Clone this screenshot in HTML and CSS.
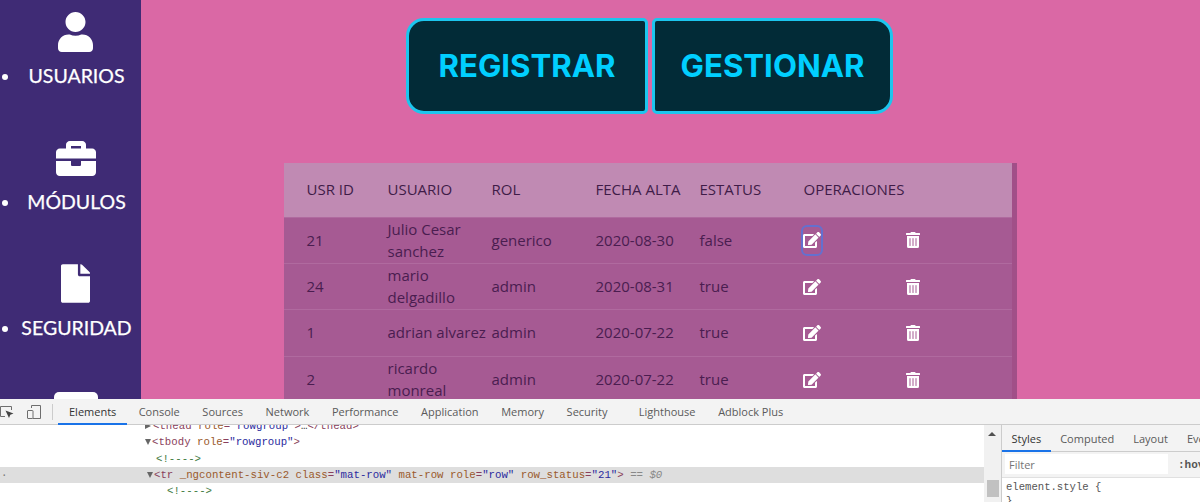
FILE: index.html
```html
<!DOCTYPE html>
<html lang="es">
<head>
<meta charset="utf-8">
<title>Usuarios</title>
<link rel="stylesheet" href="styles.css">
</head>
<body>
<div class="viewport">
  <nav class="sidebar">
    <div class="nav-item">
      <svg class="ico ico-user" viewBox="0 0 448 512"><path d="M224 256c70.7 0 128-57.3 128-128S294.7 0 224 0 96 57.3 96 128s57.3 128 128 128zm89.6 32h-16.7c-22.2 10.2-46.9 16-72.9 16s-50.6-5.8-72.9-16h-16.7C60.2 288 0 348.2 0 422.4V464c0 26.5 21.5 48 48 48h352c26.5 0 48-21.5 48-48v-41.6c0-74.2-60.2-134.4-134.4-134.4z"/></svg>
      <span class="nav-label">USUARIOS</span>
    </div>
    <div class="nav-item">
      <svg class="ico ico-case" viewBox="0 32 512 448"><path d="M320 336c0 8.84-7.16 16-16 16h-96c-8.84 0-16-7.16-16-16v-48H0v144c0 25.6 22.4 48 48 48h416c25.6 0 48-22.4 48-48V288H320v48zm144-208h-80V80c0-25.6-22.4-48-48-48H176c-25.6 0-48 22.4-48 48v48H48c-25.6 0-48 22.4-48 48v80h512v-80c0-25.6-22.4-48-48-48zm-144 0H192V96h128v32z"/></svg>
      <span class="nav-label">MÓDULOS</span>
    </div>
    <div class="nav-item">
      <svg class="ico ico-file" viewBox="0 0 384 512"><path d="M224 136V0H24C10.7 0 0 10.7 0 24v464c0 13.3 10.7 24 24 24h336c13.3 0 24-10.7 24-24V160H248c-13.2 0-24-10.8-24-24zm160-14.1v6.1H256V0h6.1c6.4 0 12.5 2.5 17 7l97.9 98c4.5 4.5 7 10.6 7 16.9z"/></svg>
      <span class="nav-label">SEGURIDAD</span>
    </div>
    <div class="nav-item">
      <div class="ico-partial"></div>
    </div>
  </nav>
  <main class="content">
    <div class="actions">
      <button class="btn btn-left">REGISTRAR</button>
      <button class="btn btn-right">GESTIONAR</button>
    </div>
    <div class="table-wrap">
      <table class="users">
        <thead>
          <tr><th>USR ID</th><th>USUARIO</th><th>ROL</th><th>FECHA ALTA</th><th>ESTATUS</th><th colspan="2">OPERACIONES</th></tr>
        </thead>
        <tbody>
          <tr><td>21</td><td>Julio Cesar sanchez</td><td>generico</td><td>2020-08-30</td><td>false</td>
            <td><span class="op op-focus"><svg class="ico-edit" viewBox="0 0 576 512"><use href="#edit"/></svg></span></td>
            <td><svg class="ico-trash" viewBox="0 0 448 512"><use href="#trash"/></svg></td></tr>
          <tr><td>24</td><td>mario delgadillo</td><td>admin</td><td>2020-08-31</td><td>true</td>
            <td><span class="op"><svg class="ico-edit" viewBox="0 0 576 512"><use href="#edit"/></svg></span></td>
            <td><svg class="ico-trash" viewBox="0 0 448 512"><use href="#trash"/></svg></td></tr>
          <tr><td>1</td><td>adrian alvarez</td><td>admin</td><td>2020-07-22</td><td>true</td>
            <td><span class="op"><svg class="ico-edit" viewBox="0 0 576 512"><use href="#edit"/></svg></span></td>
            <td><svg class="ico-trash" viewBox="0 0 448 512"><use href="#trash"/></svg></td></tr>
          <tr><td>2</td><td>ricardo monreal</td><td>admin</td><td>2020-07-22</td><td>true</td>
            <td><span class="op"><svg class="ico-edit" viewBox="0 0 576 512"><use href="#edit"/></svg></span></td>
            <td><svg class="ico-trash" viewBox="0 0 448 512"><use href="#trash"/></svg></td></tr>
        </tbody>
      </table>
      <div class="table-scroll"></div>
    </div>
  </main>
</div>

<section class="devtools">
  <div class="dt-tabs">
    <svg class="dt-tool dt-inspect" viewBox="0 0 16 16"><path class="dt-line" d="M6 12.5H1.5v-10h11V6"/><path class="dt-fill" d="M6.5 6.5l8 3-3.2 1.2L10 14z"/></svg>
    <svg class="dt-tool dt-device" viewBox="0 0 16 16"><path class="dt-line" d="M5.5 4V1.5h9v13H7"/><rect class="dt-line" x="1.5" y="6.5" width="5.5" height="8" rx=".5"/></svg>
    <span class="dt-sep"></span>
    <span class="dt-tab is-active">Elements</span>
    <span class="dt-tab">Console</span>
    <span class="dt-tab">Sources</span>
    <span class="dt-tab">Network</span>
    <span class="dt-tab">Performance</span>
    <span class="dt-tab">Application</span>
    <span class="dt-tab">Memory</span>
    <span class="dt-tab dt-tab-wide">Security</span>
    <span class="dt-tab">Lighthouse</span>
    <span class="dt-tab">Adblock Plus</span>
  </div>
  <div class="dt-body">
    <div class="dt-dom">
      <div class="dom-line dom-clip l1"><i class="tri tri-r"></i><span class="tag">&lt;thead</span> <span class="an">role</span><span class="tag">=</span><span class="av">"rowgroup"</span><span class="tag">&gt;</span>…<span class="tag">&lt;/thead&gt;</span></div>
      <div class="dom-line l1"><i class="tri"></i><span class="tag">&lt;tbody</span> <span class="an">role</span><span class="tag">=</span><span class="av">"rowgroup"</span><span class="tag">&gt;</span></div>
      <div class="dom-line l2"><span class="cm">&lt;!----&gt;</span></div>
      <div class="dom-line l3 is-selected"><span class="dot">·</span><i class="tri"></i><span class="tag">&lt;tr</span> <span class="an">_ngcontent-siv-c2</span> <span class="an">class</span><span class="tag">=</span><span class="av">"mat-row"</span> <span class="an">mat-row</span> <span class="an">role</span><span class="tag">=</span><span class="av">"row"</span> <span class="an">row_status</span><span class="tag">=</span><span class="av">"21"</span><span class="tag">&gt;</span> <span class="eq">== <em>$0</em></span></div>
      <div class="dom-line l4"><span class="cm">&lt;!----&gt;</span></div>
    </div>
    <div class="dt-scroll"><i class="sb-up"></i><i class="sb-thumb"></i></div>
    <div class="dt-side">
      <div class="side-tabs">
        <span class="side-tab is-active">Styles</span>
        <span class="side-tab">Computed</span>
        <span class="side-tab">Layout</span>
        <span class="side-tab">Event Listeners</span>
      </div>
      <div class="side-filter"><span class="filter-box">Filter</span><span class="hov">:hov</span></div>
      <div class="side-code">element.style {<br>}</div>
    </div>
  </div>
</section>

<svg class="defs" width="0" height="0">
  <symbol id="edit" viewBox="0 0 576 512"><path d="M402.6 83.2l90.2 90.2c3.8 3.8 3.8 10 0 13.8L274.4 405.6l-92.8 10.3c-12.4 1.4-22.9-9.1-21.5-21.5l10.3-92.8L388.8 83.2c3.8-3.8 10-3.8 13.8 0zm162-22.9l-48.8-48.8c-15.2-15.2-39.9-15.2-55.2 0l-35.4 35.4c-3.8 3.8-3.8 10 0 13.8l90.2 90.2c3.8 3.8 10 3.8 13.8 0l35.4-35.4c15.2-15.3 15.2-40 0-55.2zM384 346.2V448H64V128h229.8c3.2 0 6.2-1.3 8.5-3.5l40-40c7.6-7.6 2.2-20.5-8.5-20.5H48C21.5 64 0 85.5 0 112v352c0 26.5 21.5 48 48 48h352c26.5 0 48-21.5 48-48V306.2c0-10.7-12.9-16-20.5-8.5l-40 40c-2.2 2.3-3.5 5.3-3.5 8.5z"/></symbol>
  <symbol id="trash" viewBox="0 0 448 512"><path d="M32 464a48 48 0 0 0 48 48h288a48 48 0 0 0 48-48V128H32zm272-256a16 16 0 0 1 32 0v224a16 16 0 0 1-32 0zm-96 0a16 16 0 0 1 32 0v224a16 16 0 0 1-32 0zm-96 0a16 16 0 0 1 32 0v224a16 16 0 0 1-32 0zM432 32H312l-9.4-18.7A24 24 0 0 0 281.1 0H166.8a23.72 23.72 0 0 0-21.4 13.3L136 32H16A16 16 0 0 0 0 48v32a16 16 0 0 0 16 16h416a16 16 0 0 0 16-16V48a16 16 0 0 0-16-16z"/></symbol>
</svg>
</body>
</html>
```

FILE: styles.css
```css
* { box-sizing: border-box; }
html, body { margin: 0; height: 502px; overflow: hidden; background: #fff; }
body { display: flex; flex-direction: column; font-family: "Open Sans", sans-serif; }

.viewport { display: flex; height: 399px; overflow: hidden; background: #da68a5; flex: none; }

/* sidebar */
.sidebar { width: 141px; flex: none; background: #3f2b75; color: #fff; font-family: Lato, sans-serif; height: 399px; overflow: hidden; }
.nav-item { height: 126px; position: relative; display: flex; flex-direction: column; align-items: center; padding-left: 10px; }
.nav-item:first-child { height: 138px; padding-top: 12px; }
.ico { fill: #fff; display: block; }
.ico-user { width: 35px; height: 40px; margin-bottom: 13px; }
.ico-case { width: 40px; height: 35px; margin-top: 3px; margin-bottom: 15px; }
.ico-file { width: 29px; height: 39px; margin-bottom: 14px; }
.ico-partial { width: 44px; height: 20px; margin-top: 2px; background: #fff; border-radius: 5px 5px 0 0; }
.nav-label { font-size: 19.5px; line-height: 22px; font-weight: 400; -webkit-text-stroke: .25px #fff; margin-left: 2px; }
.nav-label::before { content: ""; position: absolute; left: 2px; width: 6px; height: 6px; margin-top: 9px; border-radius: 50%; background: #fff; }

/* content */
.content { flex: 1; padding: 18px 41px 0 0; display: flex; flex-direction: column; align-items: center; min-width: 0; }
.actions { display: flex; gap: 4px; margin: 0 1px 49px 0; }
.btn { width: 242px; height: 96px; background: #022b37; border: 3px solid #1cc6ee; color: #00cfff; font-family: Inter, sans-serif; font-size: 31.2px; font-weight: 700; padding: 0; }
.btn-left { border-radius: 18px 5px 5px 18px; }
.btn-right { width: 241px; border-radius: 5px 18px 18px 5px; }

.table-wrap { display: flex; width: 733px; flex: none; }
.users { width: 728px; table-layout: fixed; border-collapse: collapse; color: #4a1d50; font-size: 15px; line-height: 22px; font-family: "Open Sans", sans-serif; }
.users th { height: 54px; background: #c08ab3; text-align: left; font-weight: 400; padding: 0 0 2px; color: #3f1c48; }
.users td { height: 46.4px; background: #a65a93; padding: 0; border-top: 1px solid #b06a9f; vertical-align: middle; }
.users td:nth-child(-n+5) { padding-bottom: 1px; }
.users th:first-child, .users td:first-child { padding-left: 23px; }
.users td:nth-child(6) svg, .users td:nth-child(7) svg { display: block; }
.op { display: inline-block; padding: 5.5px 0; margin-left: -3px; border: 2px solid transparent; border-radius: 6px; vertical-align: middle; }
.op-focus { border-color: #6470cf; }
.ico-edit { width: 18px; height: 16px; fill: #fff; }
.ico-trash { width: 14px; height: 16px; fill: #fff; margin-left: -2px; }
.table-scroll { width: 5px; background: #a14f88; }
.defs { position: absolute; }

/* devtools */
.devtools { height: 103px; flex: none; background: #fff; font-family: "Open Sans", sans-serif; overflow: hidden; }
.dt-tabs { height: 26px; background: #f3f3f3; border-bottom: 1px solid #ccc; display: flex; align-items: flex-start; font-size: 11px; color: #5a5a5a; }
.dt-tool { width: 16px; height: 16px; flex: none; margin-top: 5px; }
.dt-inspect { margin-left: -1px; }
.dt-device { margin-left: 11px; }
.dt-line { fill: none; stroke: #6e6e6e; stroke-width: 1; }
.dt-fill { fill: #444; }
.dt-sep { width: 1px; height: 16px; background: #ccc; margin: 5px 5px 0 10px; flex: none; }
.dt-tab { padding: 0 11.3px; height: 26px; line-height: 26px; flex: none; }
.dt-tab-wide { padding-right: 20px; }
.dt-tab.is-active { border-bottom: 2px solid #1a73e8; color: #333; padding: 0 11px; }
.dt-body { display: flex; height: 77px; }
.dt-dom { width: 984px; flex: none; font-family: "Liberation Mono", monospace; font-size: 10.73px; color: #333; overflow: hidden; }
.dom-line { height: 16.33px; line-height: 16.33px; white-space: pre; position: relative; }
.dom-clip { margin-top: -7px; }
.l1 { padding-left: 145px; }
.l2 { padding-left: 156px; }
.l3 { padding-left: 156px; }
.l4 { padding-left: 167px; }
.is-selected { background: #dedede; }
.tri { display: inline-block; width: 0; height: 0; border-left: 3.5px solid transparent; border-right: 3.5px solid transparent; border-top: 6px solid #666; margin-right: 1px; }
.tri-r { border-top: 3.5px solid transparent; border-bottom: 3.5px solid transparent; border-left: 6px solid #666; border-right: 0; margin-right: 2px; }
.l3 .tri { margin-left: -9px; }
.dot { position: absolute; left: 1px; color: #777; }
.tag { color: #8a3f5c; }
.an { color: #9a5a2c; }
.av { color: #2b2b9e; }
.cm { color: #3e7a3e; }
.eq { color: #888; }
.eq em { font-style: italic; }
.dt-scroll { width: 17px; flex: none; background: #f1f1f1; position: relative; }
.sb-up { position: absolute; left: 4px; top: 7px; border-left: 4px solid transparent; border-right: 4px solid transparent; border-bottom: 4px solid #505050; }
.sb-thumb { position: absolute; left: 3px; top: 55px; width: 12px; height: 17px; background: #c1c1c1; }
.dt-side { flex: 1; border-left: 1px solid #ccc; min-width: 0; overflow: hidden; }
.side-tabs { height: 27px; display: flex; background: #f3f3f3; border-bottom: 1px solid #ccc; font-size: 11px; color: #5a5a5a; white-space: nowrap; }
.side-tab { padding: 0 9.5px; line-height: 28px; height: 27px; flex: none; }
.side-tab.is-active { border-bottom: 2px solid #1a73e8; color: #333; }
.side-filter { height: 26px; background: #f3f3f3; display: flex; align-items: flex-start; padding: 2px 0 0 3px; font-size: 11px; color: #757575; border-bottom: 1px solid #e0e0e0; }
.filter-box { width: 163px; height: 20px; line-height: 22px; padding-left: 4px; background: #fff; flex: none; }
.hov { margin-left: 10px; line-height: 22px; font-family: "Liberation Mono", monospace; font-weight: 700; color: #555; }
.side-code { font-family: "Liberation Mono", monospace; font-size: 10.6px; line-height: 14px; color: #555; padding: 2px 0 0 4px; }
```
